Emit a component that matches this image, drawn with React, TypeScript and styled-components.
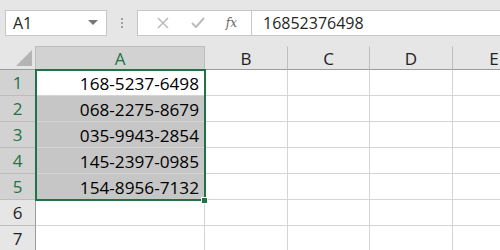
import React from 'react';
import styled, { createGlobalStyle } from 'styled-components';

const GlobalStyle = createGlobalStyle`
  html, body { margin: 0; padding: 0; background: #e6e6e6; }
  * { box-sizing: border-box; }
`;

const colors = {
  chrome: '#e6e6e6',
  headerSel: '#d2d2d2',
  green: '#217346',
  grid: '#d4d4d4',
  fill: '#c6c6c6',
};

const COLS = [
  { name: 'A', width: 169 },
  { name: 'B', width: 83 },
  { name: 'C', width: 82 },
  { name: 'D', width: 83 },
  { name: 'E', width: 83 },
];

const values = ['168-5237-6498', '068-2275-8679', '035-9943-2854', '145-2397-0985', '154-8956-7132'];

const Screen = styled.div`
  width: 500px;
  height: 250px;
  overflow: hidden;
  background: ${colors.chrome};
  font-family: 'Open Sans', 'Liberation Sans', sans-serif;
`;

const Toolbar = styled.div`
  display: flex;
  align-items: center;
  height: 46px;
  padding: 0 0 1px 5px;
`;

const NameBox = styled.div`
  display: flex;
  align-items: center;
  justify-content: space-between;
  width: 102px;
  height: 26px;
  background: #fff;
  border: 1px solid #c6c6c6;
  padding: 0 8px 0 7px;
  font-size: 16px;
  color: #262626;
`;

const Caret = styled.span`
  width: 0;
  height: 0;
  border-left: 5px solid transparent;
  border-right: 5px solid transparent;
  border-top: 5px solid #777;
`;

const Grip = styled.div`
  width: 30px;
  display: flex;
  flex-direction: column;
  align-items: center;
  gap: 2px;
  span {
    width: 2px;
    height: 2px;
    background: #a0a0a0;
  }
`;

const FxBox = styled.div`
  display: flex;
  align-items: center;
  justify-content: space-around;
  width: 114px;
  height: 26px;
  background: #fff;
  border: 1px solid #c6c6c6;
  border-right: none;
  padding: 0 4px 0 8px;
`;

const FxText = styled.span`
  font-family: 'DejaVu Serif', 'Liberation Serif', serif;
  font-style: italic;
  font-size: 12px;
  color: #666;
`;

const Formula = styled.div`
  flex: 1;
  height: 26px;
  background: #fff;
  border: 1px solid #c6c6c6;
  border-right: none;
  display: flex;
  align-items: center;
  padding-left: 11px;
  font-size: 16px;
  color: #262626;
`;

const Sheet = styled.div`
  position: relative;
`;

const Row = styled.div<{ $head?: boolean }>`
  display: flex;
  height: ${(p) => (p.$head ? '24px' : '26px')};
`;

const Corner = styled.div`
  width: 36px;
  flex: none;
  background: ${colors.chrome};
  border-right: 1px solid #bdbdbd;
  border-bottom: 1px solid #9b9b9b;
  position: relative;
  &::after {
    content: '';
    position: absolute;
    right: 3px;
    bottom: 3px;
    border-left: 16px solid transparent;
    border-bottom: 16px solid #b4b4b4;
  }
`;

const ColHead = styled.div<{ $w: number; $sel?: boolean }>`
  width: ${(p) => p.$w}px;
  flex: none;
  display: flex;
  align-items: center;
  justify-content: center;
  font-size: 17px;
  color: ${(p) => (p.$sel ? colors.green : '#222')};
  background: ${(p) => (p.$sel ? colors.headerSel : colors.chrome)};
  border-right: 1px solid #bdbdbd;
  border-bottom: 1px solid ${(p) => (p.$sel ? colors.green : '#9b9b9b')};
  border-top: 1px solid ${(p) => (p.$sel ? '#bdbdbd' : 'transparent')};
  padding-top: 1px;
`;

const RowHead = styled.div<{ $sel?: boolean }>`
  width: 36px;
  flex: none;
  display: flex;
  align-items: center;
  justify-content: center;
  font-size: 17px;
  color: ${(p) => (p.$sel ? colors.green : '#222')};
  background: ${(p) => (p.$sel ? colors.headerSel : colors.chrome)};
  border-bottom: 1px solid #bdbdbd;
  border-right: 1px solid ${(p) => (p.$sel ? colors.green : '#9b9b9b')};
`;

const Cell = styled.div<{ $w: number; $fill?: boolean }>`
  width: ${(p) => p.$w}px;
  flex: none;
  display: flex;
  align-items: center;
  justify-content: flex-end;
  padding: 2px 5px 0 0;
  font-size: 17.2px;
  color: #000;
  background: ${(p) => (p.$fill ? colors.fill : '#fff')};
  border-right: 1px solid ${colors.grid};
  border-bottom: 1px solid ${colors.grid};
`;

const Selection = styled.div`
  position: absolute;
  left: 35px;
  top: 23px;
  width: 171px;
  height: 132px;
  border: 2px solid ${colors.green};
  pointer-events: none;
`;

const Handle = styled.div`
  position: absolute;
  left: 201px;
  top: 151px;
  width: 7px;
  height: 7px;
  background: ${colors.green};
  border: 1px solid #fff;
`;

const App: React.FC = () => {
  const rows = Array.from({ length: 7 }, (_, i) => i + 1);
  return (
    <Screen>
      <GlobalStyle />
      <Toolbar>
        <NameBox>
          <span>A1</span>
          <Caret />
        </NameBox>
        <Grip>
          <span />
          <span />
          <span />
        </Grip>
        <FxBox>
          <svg width="14" height="14" viewBox="0 0 14 14">
            <path d="M2 2 L12 12 M12 2 L2 12" stroke="#bcbcbc" strokeWidth="1.6" fill="none" />
          </svg>
          <svg width="16" height="14" viewBox="0 0 16 14">
            <path d="M2 7 L6 11 L14 2" stroke="#bcbcbc" strokeWidth="2" fill="none" />
          </svg>
          <FxText>fx</FxText>
        </FxBox>
        <Formula>16852376498</Formula>
      </Toolbar>
      <Sheet>
        <Row $head>
          <Corner />
          {COLS.map((c, i) => (
            <ColHead key={c.name} $w={c.width} $sel={i === 0}>
              {c.name}
            </ColHead>
          ))}
        </Row>
        {rows.map((r) => (
          <Row key={r}>
            <RowHead $sel={r <= 5}>{r}</RowHead>
            {COLS.map((c, i) => (
              <Cell key={c.name} $w={c.width} $fill={i === 0 && r > 1 && r <= 5}>
                {i === 0 && r <= 5 ? values[r - 1] : ''}
              </Cell>
            ))}
          </Row>
        ))}
        <Selection />
        <Handle />
      </Sheet>
    </Screen>
  );
};

export default App;
